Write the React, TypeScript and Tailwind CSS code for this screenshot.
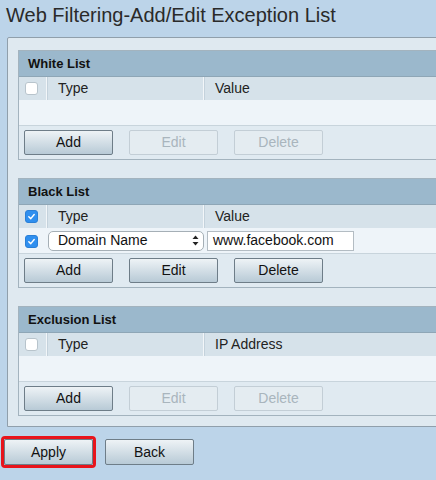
import React from "react";

const font = { fontFamily: '"Liberation Sans", Arial, Helvetica, sans-serif' };

function Checkbox({ checked }: { checked?: boolean }) {
    if (checked) {
        return (
            <div className="w-[13px] h-[13px] rounded-[3px] bg-[#2f8fef] border border-[#2a7fd6] flex items-center justify-center">
                <svg width="9" height="9" viewBox="0 0 10 10">
                    <path d="M2 5.2 L4.2 7.4 L8 2.8" stroke="white" strokeWidth="1.6" fill="none" strokeLinecap="round" strokeLinejoin="round" />
                </svg>
            </div>
        );
    }
    return <div className="w-[13px] h-[13px] rounded-[3px] bg-white border border-[#b8c4cc]" />;
}

function Btn({ label, disabled }: { label: string; disabled?: boolean }) {
    return (
        <div
            className={
                disabled
                    ? "w-[89px] h-[25px] rounded-[2px] border border-[#c3ced6] bg-[#e4ecf1] text-[#a9b5bd] text-[14px] flex items-center justify-center"
                    : "w-[89px] h-[25px] rounded-[2px] border border-[#6e7d88] bg-gradient-to-b from-[#eef3f6] to-[#b8cad6] text-[#111] text-[14px] flex items-center justify-center"
            }
        >
            {label}
        </div>
    );
}

function ColHeader({ checked, second }: { checked?: boolean; second: string }) {
    return (
        <div className="h-[23px] bg-[#d6e2ea] flex items-center text-[14px] text-[#222]">
            <div className="w-[28px] h-full flex items-center pl-[6px] border-r border-[#f2f6f9]">
                <Checkbox checked={checked} />
            </div>
            <div className="w-[157px] h-full flex items-center pl-[10px] border-r border-[#f2f6f9] border-l border-l-[#c4d2dc]">Type</div>
            <div className="flex-1 h-full flex items-center pl-[10px] border-l border-[#c4d2dc]">{second}</div>
        </div>
    );
}

function Section({ title, children, disabled, checked, second }: { title: string; children?: React.ReactNode; disabled?: boolean; checked?: boolean; second: string }) {
    return (
        <div className="border border-[#a3b3be] border-r-0">
            <div className="h-[26px] bg-[#9bb8cc] border-b border-[#8ea6b6] flex items-center pl-[9px] text-[13px] font-bold text-[#111]">{title}</div>
            <ColHeader checked={checked} second={second} />
            {children ?? <div className="h-[26px] bg-[#eef4f9] border-b border-[#c8d4dc]" />}
            <div className="h-[33px] flex items-center gap-[16px] pl-[5px] bg-[#e0eaf1]">
                <Btn label="Add" />
                <Btn label="Edit" disabled={disabled} />
                <Btn label="Delete" disabled={disabled} />
            </div>
        </div>
    );
}

export default function App() {
    return (
        <div className="w-[436px] h-[480px] overflow-hidden bg-[#bcd4e9]" style={font}>
            <div className="h-[37px] pl-[6px] pt-[2px] text-[20px] leading-[26px] text-[#2a2a2a]">Web Filtering-Add/Edit Exception List</div>
            <div className="ml-[7px] w-[460px] bg-[#dfe9f0] border border-[#909fab] rounded-tl-[2px] pt-[12px] pb-[10px] pl-[10px] flex flex-col gap-[18px]">
                <Section title="White List" disabled second="Value" />
                <Section title="Black List" checked second="Value">
                    <div className="h-[26px] bg-[#eef4f9] border-b border-[#c8d4dc] flex items-center">
                        <div className="w-[28px] flex items-center pl-[6px] pt-[2px]">
                            <Checkbox checked />
                        </div>
                        <div className="ml-[1px] w-[156px] h-[20px] bg-white border border-[#a5afb6] rounded-[5px] flex items-center justify-between pl-[9px] pr-[4px] text-[14px] text-[#111]">
                            <span>Domain Name</span>
                            <svg width="7" height="11" viewBox="0 0 7 11">
                                <path d="M3.5 0.5 L6.5 4 L0.5 4 Z" fill="#222" />
                                <path d="M3.5 10.5 L6.5 7 L0.5 7 Z" fill="#222" />
                            </svg>
                        </div>
                        <div className="ml-[3px] w-[147px] h-[20px] bg-white border border-[#b3bcc3] flex items-center pl-[5px] text-[14px] text-[#111]">www.facebook.com</div>
                    </div>
                </Section>
                <Section title="Exclusion List" disabled second="IP Address" />
            </div>
            <div className="flex items-center gap-[9px] pt-[9px]">
                <div className="border-[3px] border-[#e8141c] rounded-[4px] ml-[1px]">
                    <div className="w-[89px] h-[26px] border border-[#6e7d88] rounded-[2px] bg-gradient-to-b from-[#eef3f6] to-[#b8cad6] text-[14px] text-[#111] flex items-center justify-center">Apply</div>
                </div>
                <div className="w-[89px] h-[26px] border border-[#6e7d88] rounded-[2px] bg-gradient-to-b from-[#eef3f6] to-[#b8cad6] text-[14px] text-[#111] flex items-center justify-center">Back</div>
            </div>
        </div>
    );
}
